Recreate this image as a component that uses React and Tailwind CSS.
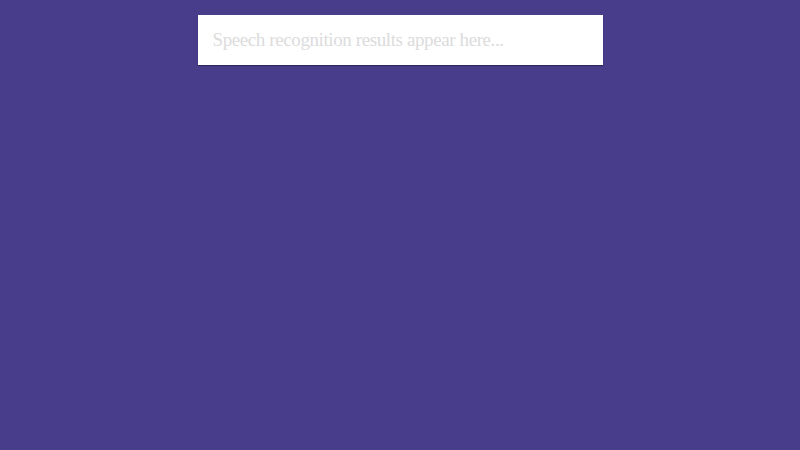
export default function App() {
  return (
    <div className="min-h-screen w-full bg-[#483d8b] pt-[15px]">
      <div className="mx-auto h-[50px] w-[405px] bg-white shadow-[0_1px_1px_rgba(0,0,0,0.35)] flex items-center px-[15px]">
        <span className="text-[19px] tracking-[-0.4px] text-[#dcdcdc]" style={{ fontFamily: '"Liberation Serif", serif' }}>
          Speech recognition results appear here...
        </span>
      </div>
    </div>
  )
}
